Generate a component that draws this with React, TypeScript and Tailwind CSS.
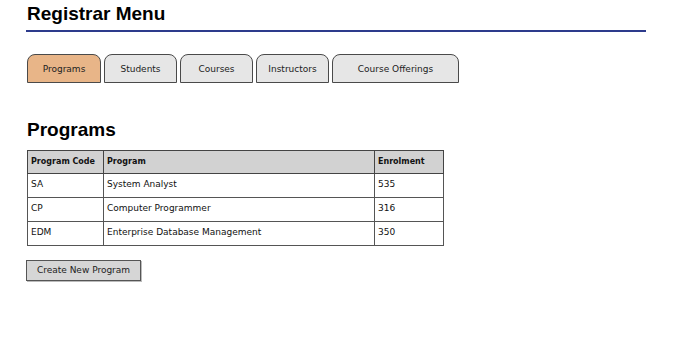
const tabs = [
  { label: "Programs", w: "w-[74px]", active: true },
  { label: "Students", w: "w-[73px]" },
  { label: "Courses", w: "w-[73px]" },
  { label: "Instructors", w: "w-[73px]" },
  { label: "Course Offerings", w: "w-[127px]" },
];

const rows = [
  { code: "SA", name: "System Analyst", enrol: "535" },
  { code: "CP", name: "Computer Programmer", enrol: "316" },
  { code: "EDM", name: "Enterprise Database Management", enrol: "350" },
];

const sketch = { fontFamily: '"Comic Sans MS", "DejaVu Sans", sans-serif' };

export default function App() {
  return (
    <div className="w-[678px] h-[359px] bg-white px-[26px] pt-[2px]">
      <h1 className="text-[19px] font-bold text-black leading-[24px] pl-[1px]" style={{ fontFamily: '"Liberation Sans", Arial, sans-serif' }}>
        Registrar Menu
      </h1>
      <div className="mt-[4px] w-[620px] h-[2px] bg-[#2d3b8c]" />

      <div className="mt-[22px] flex gap-[3px] pl-[1px]" style={sketch}>
        {tabs.map((t) => (
          <div
            key={t.label}
            className={`${t.w} h-[29px] pt-[3px] flex items-center justify-center text-[9px] text-[#222] whitespace-nowrap border-[1.5px] border-[#4a4a4a] rounded-t-[8px] ${t.active ? "bg-[#e8b588]" : "bg-[#e6e6e6]"}`}
          >
            {t.label}
          </div>
        ))}
      </div>

      <h2 className="mt-[35px] text-[19px] font-bold text-black leading-[24px] pl-[1px]" style={{ fontFamily: '"Liberation Sans", Arial, sans-serif' }}>
        Programs
      </h2>

      <table className="mt-[8px] ml-[1px] w-[417px] table-fixed border-collapse border-[1.5px] border-[#333] text-[9px] text-[#111] whitespace-nowrap" style={sketch}>
        <thead>
          <tr className="bg-[#d2d2d2] h-[23px] text-[8px]">
            <th className="w-[76px] border border-[#444] text-left font-bold px-[3px]">Program Code</th>
            <th className="w-[271px] border border-[#444] text-left font-bold px-[3px]">Program</th>
            <th className="border border-[#444] text-left font-bold px-[3px]">Enrolment</th>
          </tr>
        </thead>
        <tbody>
          {rows.map((r) => (
            <tr key={r.code} className="h-[24px]">
              <td className="border border-[#555] px-[3px] align-top pt-[4px]">{r.code}</td>
              <td className="border border-[#555] px-[3px] align-top pt-[4px]">{r.name}</td>
              <td className="border border-[#555] px-[3px] align-top pt-[4px]">{r.enrol}</td>
            </tr>
          ))}
        </tbody>
      </table>

      <button
        className="mt-[14px] w-[115px] h-[21px] bg-[#d6d6d6] border border-[#555] text-[9px] text-[#222] whitespace-nowrap shadow-[1px_1px_0_#bbb]"
        style={sketch}
      >
        Create New Program
      </button>
    </div>
  );
}
